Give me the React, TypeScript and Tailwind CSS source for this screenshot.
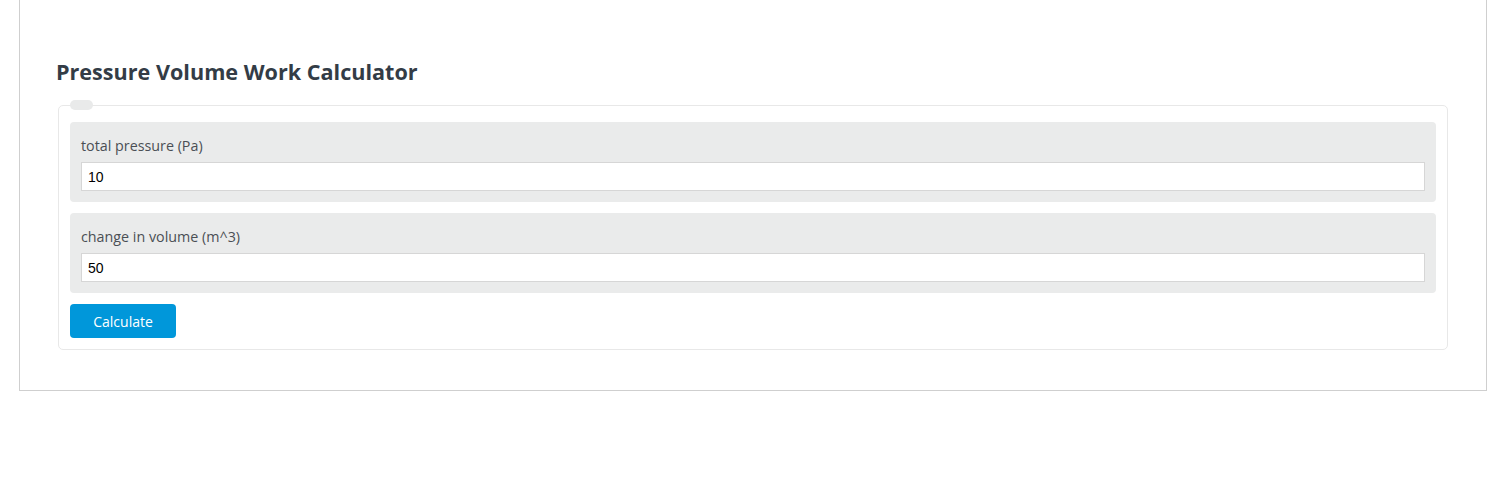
import { FC } from "react";

interface FieldProps {
  label: string;
  value: string;
}

const Field: FC<FieldProps> = ({ label, value }) => {
  return (
    <div className="rounded-[4px] bg-[#eaebeb] px-[11px] pt-[14px] pb-[11px]">
      <label className="block text-[14.3px] leading-[20px] text-[#4a4f55] mb-[6px]">
        {label}
      </label>
      <input
        type="text"
        defaultValue={value}
        className="block w-full h-[29px] border border-[#d6d6d6] bg-white px-[6px] text-[14px] text-black outline-none"
        style={{ fontFamily: "'Liberation Sans', Arial, sans-serif" }}
      />
    </div>
  );
};

export default function App() {
  return (
    <div
      className="min-h-[503px] bg-white pl-[19px] pr-[3px]"
      style={{ fontFamily: "'Open Sans', 'Noto Sans', sans-serif" }}
    >
      <div className="border-x border-b border-[#cfcfcf] h-[391px] pl-[38px] pr-[38px] pt-[58px]">
        <h1 className="-ml-[2px] text-[21.6px] leading-[28px] font-bold text-[#333c46]">
          Pressure Volume Work Calculator
        </h1>
        {/* form box with the empty legend pill */}
        <fieldset className="relative mt-[19px] rounded-[5px] border border-[#e8e8e8] px-[11px] pt-[16px] pb-[11px]">
          <legend className="absolute -top-[6px] left-[11px] h-[10px] w-[23px] rounded-full bg-[#e9eaea]"></legend>
          <div className="flex flex-col gap-[11px]">
            <Field label="total pressure (Pa)" value="10" />
            <Field label="change in volume (m^3)" value="50" />
          </div>
          <button className="mt-[11px] h-[34px] w-[106px] rounded-[4px] bg-[#0097da] text-[14px] text-white">
            Calculate
          </button>
        </fieldset>
      </div>
    </div>
  );
}
